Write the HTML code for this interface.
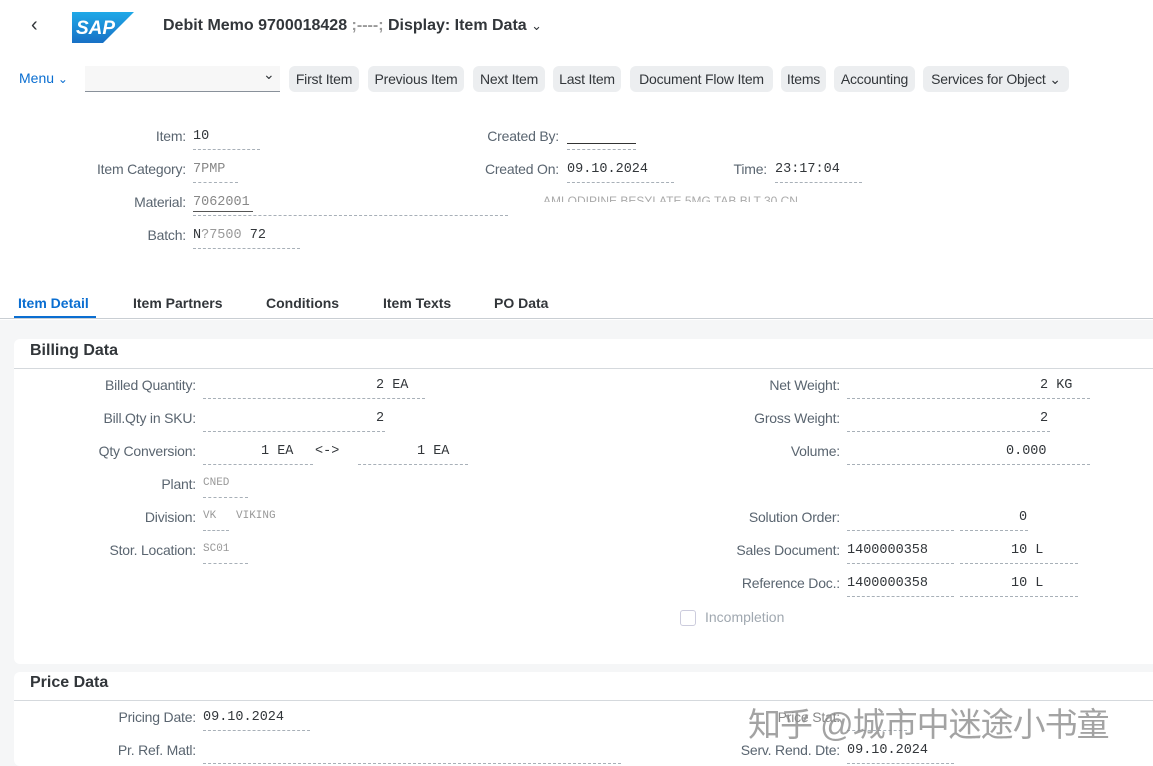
<!DOCTYPE html>
<html><head><meta charset="utf-8"><style>
*{margin:0;padding:0;box-sizing:border-box}
body{width:1153px;height:766px;overflow:hidden;background:#f5f6f7;font-family:"Liberation Sans",sans-serif;position:relative;color:#32363a}
.a{position:absolute;white-space:nowrap}
.top{position:absolute;left:0;top:0;width:1153px;height:320px;background:#fff}
.btn{position:absolute;top:66px;height:26px;background:#eceef0;border-radius:6px;font-size:14px;line-height:26px;text-align:center;color:#32363a;letter-spacing:-0.2px}
.lbl{position:absolute;font-size:14px;color:#5a6570;text-align:right;white-space:nowrap;letter-spacing:-0.2px}
.mono{position:absolute;font-family:"Liberation Mono",monospace;font-size:13.5px;color:#32363a;white-space:nowrap;margin-top:1px}
.dash{position:absolute;height:0;border-top:1px dashed #a8b0b8}
.panel{position:absolute;left:14px;width:1139px;background:#fff;border-radius:6px 0 0 6px}
.tab{position:absolute;top:295px;font-size:14px;font-weight:bold;color:#32363a}
</style></head><body>
<div class="top"></div>
<div class="a" style="left:31px;top:14px;font-size:20px;color:#32363a">&#8249;</div>
<svg class="a" style="left:72px;top:12px" width="62" height="31" viewBox="0 0 62 31"><defs><linearGradient id="g" x1="0" y1="0" x2="0" y2="1"><stop offset="0" stop-color="#1fa9e8"/><stop offset="1" stop-color="#1870c5"/></linearGradient></defs><polygon points="0,0 62,0 31,31 0,31" fill="url(#g)"/><text x="4" y="22" font-family="Liberation Sans" font-weight="bold" font-size="19" fill="#fff" font-style="italic">SAP</text></svg>
<div class="a" style="left:163px;top:17px;font-size:16px;font-weight:bold;color:#32363a">Debit Memo 9700018428 <span style="color:#999">;‐‐‐‐;</span> Display: Item Data <span style="font-weight:normal;font-size:13px">&#8964;</span></div>
<div class="a" style="left:19px;top:70px;font-size:14px;color:#0a6ed1">Menu <span style="font-size:12px">&#8964;</span></div>
<div class="a" style="left:85px;top:66px;width:195px;height:26px;background:#f7f7f7;border-bottom:1px solid #89919a"></div>
<div class="a" style="left:263px;top:66px;font-size:14px;color:#32363a">&#8964;</div>
<div class="btn" style="left:289px;width:70px">First Item</div>
<div class="btn" style="left:368px;width:96px">Previous Item</div>
<div class="btn" style="left:473px;width:72px">Next Item</div>
<div class="btn" style="left:553px;width:68px">Last Item</div>
<div class="btn" style="left:630px;width:143px">Document Flow Item</div>
<div class="btn" style="left:781px;width:45px">Items</div>
<div class="btn" style="left:834px;width:81px">Accounting</div>
<div class="btn" style="left:923px;width:146px">Services for Object &#8964;</div>

<div class="lbl" style="right:967px;top:128px">Item:</div><div class="mono" style="left:193px;top:128px">10</div><div class="dash" style="left:193px;top:149px;width:67px"></div>
<div class="lbl" style="right:967px;top:161px">Item Category:</div><div class="mono" style="left:193px;top:161px;color:#888">7PMP</div><div class="dash" style="left:193px;top:182px;width:45px"></div>
<div class="lbl" style="right:967px;top:194px">Material:</div><div class="mono" style="left:193px;top:194px;color:#888">7062001</div><div class="a" style="left:193px;top:211px;width:60px;border-top:1px solid #555"></div><div class="dash" style="left:193px;top:215px;width:315px"></div>
<div class="lbl" style="right:967px;top:227px">Batch:</div><div class="mono" style="left:193px;top:227px">N<span style="color:#999">?7500</span> 72</div><div class="dash" style="left:193px;top:248px;width:107px"></div>
<div class="lbl" style="right:594px;top:128px">Created By:</div><div class="a" style="left:567px;top:143px;width:69px;border-top:1px solid #333"></div><div class="dash" style="left:567px;top:149px;width:69px"></div>
<div class="lbl" style="right:594px;top:161px">Created On:</div><div class="mono" style="left:567px;top:161px">09.10.2024</div><div class="dash" style="left:567px;top:182px;width:107px"></div>
<div class="lbl" style="right:386px;top:161px">Time:</div><div class="mono" style="left:775px;top:161px">23:17:04</div><div class="dash" style="left:775px;top:182px;width:87px"></div>
<div class="a" style="left:543px;top:194px;font-size:12px;color:#aaa;height:8px;overflow:hidden">AMLODIPINE BESYLATE 5MG TAB BLT 30 CN</div>

<div class="tab" style="left:18px;color:#0a6ed1">Item Detail</div>
<div class="a" style="left:14px;top:316px;width:82px;height:3px;background:#0a6ed1"></div>
<div class="tab" style="left:133px">Item Partners</div>
<div class="tab" style="left:266px">Conditions</div>
<div class="tab" style="left:383px">Item Texts</div>
<div class="tab" style="left:494px">PO Data</div>
<div class="a" style="left:0;top:318px;width:1153px;border-top:1px solid #c9ced3"></div>

<div class="panel" style="top:339px;height:325px"></div>
<div class="a" style="left:30px;top:342px;font-size:16px;font-weight:bold">Billing Data</div>
<div class="a" style="left:14px;top:368px;width:1139px;border-top:1px solid #d5d9dd"></div>

<div class="lbl" style="right:957px;top:377px">Billed Quantity:</div><div class="mono" style="left:376px;top:377px">2 EA</div><div class="dash" style="left:203px;top:398px;width:222px"></div>
<div class="lbl" style="right:957px;top:410px">Bill.Qty in SKU:</div><div class="mono" style="left:376px;top:410px">2</div><div class="dash" style="left:203px;top:431px;width:182px"></div>
<div class="lbl" style="right:957px;top:443px">Qty Conversion:</div><div class="mono" style="left:261px;top:443px">1 EA</div><div class="mono" style="left:315px;top:443px">&lt;-&gt;</div><div class="mono" style="left:417px;top:443px">1 EA</div><div class="dash" style="left:203px;top:464px;width:110px"></div><div class="dash" style="left:358px;top:464px;width:110px"></div>
<div class="lbl" style="right:957px;top:476px">Plant:</div><div class="mono" style="left:203px;top:476px;color:#999;font-size:11px">CNED</div><div class="dash" style="left:203px;top:497px;width:45px"></div>
<div class="lbl" style="right:957px;top:509px">Division:</div><div class="mono" style="left:203px;top:509px;color:#999;font-size:11px">VK &nbsp; VIKING</div><div class="dash" style="left:203px;top:530px;width:26px"></div>
<div class="lbl" style="right:957px;top:542px">Stor. Location:</div><div class="mono" style="left:203px;top:542px;color:#999;font-size:11px">SC01</div><div class="dash" style="left:203px;top:563px;width:45px"></div>

<div class="lbl" style="right:313px;top:377px">Net Weight:</div><div class="mono" style="left:1040px;top:377px">2 KG</div><div class="dash" style="left:847px;top:398px;width:243px"></div>
<div class="lbl" style="right:313px;top:410px">Gross Weight:</div><div class="mono" style="left:1040px;top:410px">2</div><div class="dash" style="left:847px;top:431px;width:203px"></div>
<div class="lbl" style="right:313px;top:443px">Volume:</div><div class="mono" style="left:1006px;top:443px">0.000</div><div class="dash" style="left:847px;top:464px;width:243px"></div>
<div class="lbl" style="right:313px;top:509px">Solution Order:</div><div class="mono" style="left:1019px;top:509px">0</div><div class="dash" style="left:847px;top:530px;width:107px"></div><div class="dash" style="left:960px;top:530px;width:68px"></div>
<div class="lbl" style="right:313px;top:542px">Sales Document:</div><div class="mono" style="left:847px;top:542px">1400000358</div><div class="mono" style="left:1011px;top:542px">10 L</div><div class="dash" style="left:847px;top:563px;width:107px"></div><div class="dash" style="left:960px;top:563px;width:118px"></div>
<div class="lbl" style="right:313px;top:575px">Reference Doc.:</div><div class="mono" style="left:847px;top:575px">1400000358</div><div class="mono" style="left:1011px;top:575px">10 L</div><div class="dash" style="left:847px;top:596px;width:107px"></div><div class="dash" style="left:960px;top:596px;width:118px"></div>
<div class="a" style="left:680px;top:610px;width:16px;height:16px;border:1px solid #ccd;border-radius:3px"></div>
<div class="a" style="left:705px;top:609px;font-size:14px;color:#a0a8b0">Incompletion</div>

<div class="panel" style="top:672px;height:94px"></div>
<div class="a" style="left:30px;top:674px;font-size:16px;font-weight:bold">Price Data</div>
<div class="a" style="left:14px;top:700px;width:1139px;border-top:1px solid #d5d9dd"></div>
<div class="lbl" style="right:957px;top:709px">Pricing Date:</div><div class="mono" style="left:203px;top:709px">09.10.2024</div><div class="dash" style="left:203px;top:730px;width:107px"></div>
<div class="lbl" style="right:957px;top:742px">Pr. Ref. Matl:</div><div class="dash" style="left:203px;top:763px;width:418px"></div>
<div class="lbl" style="right:313px;top:709px;color:#888">Price Stat:</div><div class="dash" style="left:847px;top:730px;width:60px"></div>
<div class="lbl" style="right:313px;top:742px">Serv. Rend. Dte:</div><div class="mono" style="left:847px;top:742px">09.10.2024</div><div class="dash" style="left:847px;top:763px;width:107px"></div>
<div class="a" style="left:748px;top:698px;font-size:33px;letter-spacing:-1px;color:rgba(140,140,140,0.8);font-family:'Liberation Sans','Noto Sans CJK SC',sans-serif">知乎 @城市中迷途小书童</div>
</body></html>
